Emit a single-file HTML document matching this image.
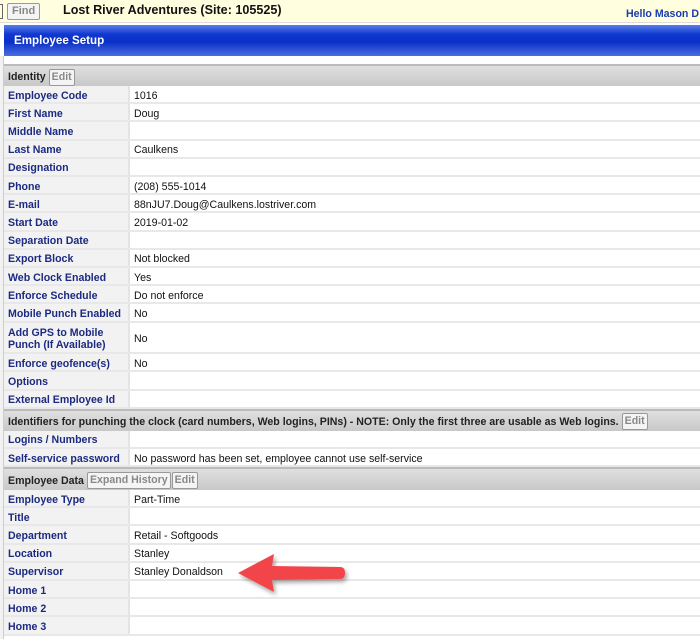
<!DOCTYPE html>
<html><head><style>
*{margin:0;padding:0;box-sizing:border-box}
body{width:700px;height:639px;overflow:hidden;background:#fff;font-family:"Liberation Sans",Arial,sans-serif;font-size:10.6px;position:relative}
.top{position:absolute;left:0;top:0;width:700px;height:23px;background:#ffffe0;border-bottom:1px solid #ddd}
.btn{display:inline-block;border:1px solid #999;border-radius:2px;background:#f4f4f4;color:#888;font-weight:bold;font-size:10.6px;padding:1px 2px;line-height:13px;vertical-align:middle}
.blue{position:absolute;left:4px;top:25px;width:696px;height:31px;background:linear-gradient(#5a7ee8 0%,#1038d0 30%,#0a30c8 55%,#4a6ee0 100%);color:#fff;font-weight:bold;font-size:11.6px;padding:9px 10px}
.lside{position:absolute;left:0;top:56px;width:4px;height:583px;background:#f2f2f2;border-right:1px solid #ccc}
.hdr{position:absolute;left:4px;width:696px;background:linear-gradient(#e0e0e0,#c8c8c8);border-top:2px solid #bbb;font-weight:bold;color:#222;padding-left:4px;padding-top:2px;display:flex;align-items:center;gap:3px}
.row{position:absolute;left:4px;width:696px;display:flex;border-bottom:2px solid #e8e8e8}
.l{width:126px;background:#f2f2f2;color:#1c2a82;font-weight:bold;padding-left:4px;padding-top:3px;display:flex;align-items:center;line-height:12px;border-right:2px solid #e4e4e4}
.v{flex:1;padding-left:4px;padding-top:3px;display:flex;align-items:center;color:#111}
</style></head><body>
<div class="top">
<span style="position:absolute;left:0;top:4px;width:3px;height:15px;border:1px solid #666;border-left:none"></span>
<span class="btn" style="position:absolute;left:7px;top:3px;font-size:11px;padding:1px 4px">Find</span>
<span style="position:absolute;left:63px;top:3px;font-weight:bold;font-size:12.6px;color:#111">Lost River Adventures (Site: 105525)</span>
<span style="position:absolute;left:626px;top:8px;font-weight:bold;font-size:10.6px;color:#1a3ab0;white-space:nowrap">Hello Mason D</span>
</div>
<div class="blue">Employee Setup</div>
<div class="lside"></div>
<div class="hdr" style="top:64px;height:22px">Identity <span class="btn">Edit</span></div>
<div class="row" style="top:86px;height:18.2px"><div class="l">Employee Code</div><div class="v">1016</div></div>
<div class="row" style="top:104.2px;height:18.2px"><div class="l">First Name</div><div class="v">Doug</div></div>
<div class="row" style="top:122.4px;height:18.2px"><div class="l">Middle Name</div><div class="v"></div></div>
<div class="row" style="top:140.6px;height:18.2px"><div class="l">Last Name</div><div class="v">Caulkens</div></div>
<div class="row" style="top:158.8px;height:18.2px"><div class="l">Designation</div><div class="v"></div></div>
<div class="row" style="top:177px;height:18.2px"><div class="l">Phone</div><div class="v">(208) 555-1014</div></div>
<div class="row" style="top:195.2px;height:18.2px"><div class="l">E-mail</div><div class="v">88nJU7.Doug@Caulkens.lostriver.com</div></div>
<div class="row" style="top:213.4px;height:18.2px"><div class="l">Start Date</div><div class="v">2019-01-02</div></div>
<div class="row" style="top:231.6px;height:18.2px"><div class="l">Separation Date</div><div class="v"></div></div>
<div class="row" style="top:249.8px;height:18.2px"><div class="l">Export Block</div><div class="v">Not blocked</div></div>
<div class="row" style="top:268px;height:18.2px"><div class="l">Web Clock Enabled</div><div class="v">Yes</div></div>
<div class="row" style="top:286.2px;height:18.2px"><div class="l">Enforce Schedule</div><div class="v">Do not enforce</div></div>
<div class="row" style="top:304.4px;height:18.2px"><div class="l">Mobile Punch Enabled</div><div class="v">No</div></div>
<div class="row" style="top:322.6px;height:31.6px"><div class="l">Add GPS to Mobile Punch (If Available)</div><div class="v">No</div></div>
<div class="row" style="top:354.2px;height:18.2px"><div class="l">Enforce geofence(s)</div><div class="v">No</div></div>
<div class="row" style="top:372.4px;height:18.2px"><div class="l">Options</div><div class="v"></div></div>
<div class="row" style="top:390.6px;height:18.2px"><div class="l">External Employee Id</div><div class="v"></div></div>
<div class="hdr" style="top:408.8px;height:22px">Identifiers for punching the clock (card numbers, Web logins, PINs) - NOTE: Only the first three are usable as Web logins. <span class="btn">Edit</span></div>
<div class="row" style="top:430.8px;height:18.2px"><div class="l">Logins / Numbers</div><div class="v"></div></div>
<div class="row" style="top:449px;height:18.2px"><div class="l">Self-service password</div><div class="v">No password has been set, employee cannot use self-service</div></div>
<div class="hdr" style="top:467.2px;height:22.8px">Employee Data <span class="btn">Expand History</span><span class="btn" style="margin-left:-2px">Edit</span></div>
<div class="row" style="top:490px;height:18.2px"><div class="l">Employee Type</div><div class="v">Part-Time</div></div>
<div class="row" style="top:508.2px;height:18.2px"><div class="l">Title</div><div class="v"></div></div>
<div class="row" style="top:526.4px;height:18.2px"><div class="l">Department</div><div class="v">Retail - Softgoods</div></div>
<div class="row" style="top:544.6px;height:18.2px"><div class="l">Location</div><div class="v">Stanley</div></div>
<div class="row" style="top:562.8px;height:18.2px"><div class="l">Supervisor</div><div class="v">Stanley Donaldson</div></div>
<div class="row" style="top:581px;height:18.2px"><div class="l">Home 1</div><div class="v"></div></div>
<div class="row" style="top:599.2px;height:18.2px"><div class="l">Home 2</div><div class="v"></div></div>
<div class="row" style="top:617.4px;height:18.2px"><div class="l">Home 3</div><div class="v"></div></div>
<svg style="position:absolute;left:230px;top:550px" width="130" height="50">
<defs><filter id="s" x="-20%" y="-30%" width="140%" height="160%"><feDropShadow dx="2" dy="3" stdDeviation="2" flood-opacity="0.35"/></filter></defs>
<g filter="url(#s)"><path d="M8,23 L44,4 L42,16 L110,17 Q115,17 115,23 Q115,29 110,29 L42,30 L44,42 Z" fill="#f2444a"/></g>
</svg>
</body></html>
